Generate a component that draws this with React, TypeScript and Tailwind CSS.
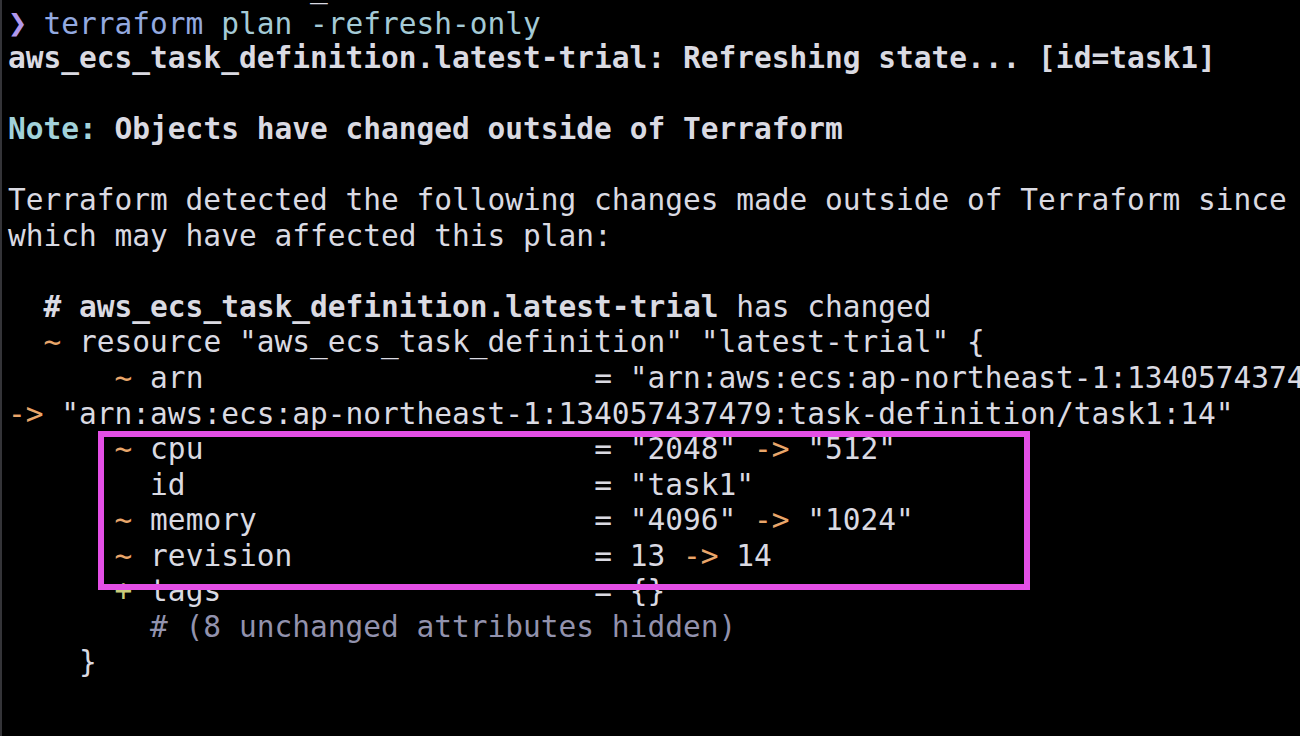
const ORANGE = 'text-[#e9a66a]';

const Line = ({ children }: { children?: React.ReactNode }) => (
  <div className="h-[35.56px] leading-[35.56px] whitespace-pre">{children}</div>
);

const Attr = ({ mark, name, children }: { mark: string; name: string; children?: React.ReactNode }) => {
  const markColor = mark === '+' ? 'text-[#c9cc7a]' : ORANGE;
  return (
    <Line>
      {'      '}
      <span className={markColor}>{mark}</span>
      {' ' + name.padEnd(25)}
      {'= '}
      {children}
    </Line>
  );
};

const Arrow = () => <span className={ORANGE}>-&gt;</span>;

const App = () => {
  return (
    <div className="relative h-[736px] w-full overflow-hidden bg-black">
      {/* terminal output */}
      <div
        className="-mt-[30px] min-h-[800px] border-l-2 border-[#343438] pl-[6px] text-[29.5px] text-[#dadae2]"
        style={{ fontFamily: '"DejaVu Sans Mono", "Liberation Mono", monospace' }}
      >
        <Line>{'                 _'}</Line>
        <Line>
          <span className="inline-block w-[17.76px] text-[32px] font-bold text-[#b198ec]">❯</span>
          {' '}
          <span className="text-[#93aae0]">terraform</span>
          <span className="text-[#a4cad6]"> plan -refresh-only</span>
        </Line>
        <Line>
          <span className="font-bold">aws_ecs_task_definition.latest-trial: Refreshing state... [id=task1]</span>
        </Line>
        <Line />
        <Line>
          <span className="font-bold text-[#a2d2da]">Note:</span>
          <span className="font-bold"> Objects have changed outside of Terraform</span>
        </Line>
        <Line />
        <Line>Terraform detected the following changes made outside of Terraform since the last "terraform apply"</Line>
        <Line>which may have affected this plan:</Line>
        <Line />
        <Line>
          {'  '}
          <span className="font-bold"># aws_ecs_task_definition.latest-trial</span>
          {' has changed'}
        </Line>
        <Line>
          {'  '}
          <span className={ORANGE}>~</span>
          {' resource "aws_ecs_task_definition" "latest-trial" {'}
        </Line>
        <Attr mark="~" name="arn">
          {'"arn:aws:ecs:ap-northeast-1:134057437479:task-definition/task1:13" '}
        </Attr>
        <Line>
          <Arrow />
          {' "arn:aws:ecs:ap-northeast-1:134057437479:task-definition/task1:14"'}
        </Line>
        <Attr mark="~" name="cpu">
          {'"2048" '}
          <Arrow />
          {' "512"'}
        </Attr>
        <Attr mark=" " name="id">
          {'"task1"'}
        </Attr>
        <Attr mark="~" name="memory">
          {'"4096" '}
          <Arrow />
          {' "1024"'}
        </Attr>
        <Attr mark="~" name="revision">
          {'13 '}
          <Arrow />
          {' 14'}
        </Attr>
        <Attr mark="+" name="tags">
          {'{}'}
        </Attr>
        <Line>
          <span className="text-[#9292ad]">{'        # (8 unchanged attributes hidden)'}</span>
        </Line>
        <Line>{'    }'}</Line>
      </div>

      {/* highlight box drawn over the output */}
      <div className="pointer-events-none absolute left-[98px] top-[431px] h-[159px] w-[932px] border-[6px] border-[#e44fe6]" />
    </div>
  );
};

export default App;
